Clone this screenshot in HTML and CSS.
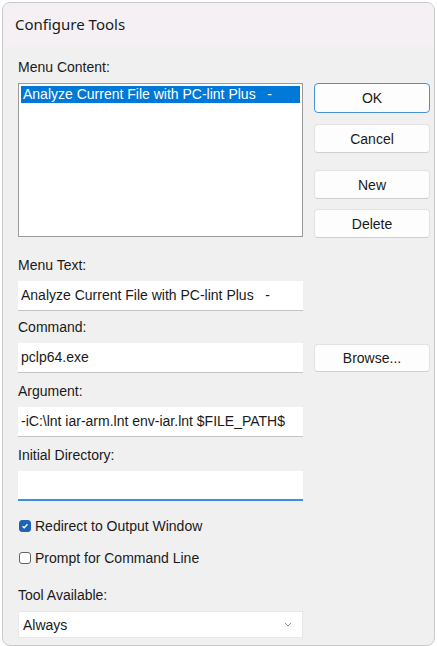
FILE: index.html
```html
<!DOCTYPE html>
<html lang="en">
<head>
  <meta charset="UTF-8" />
  <title>Configure Tools</title>
  <link rel="stylesheet" href="styles.css">
</head>
<body>
  <div class="window">
    <div class="titlebar">Configure Tools</div>

    <div class="content">
      <div class="label">Menu Content:</div>
      <div class="top-row">
        <div class="listbox">
          <div class="item selected">Analyze Current File with PC-lint Plus &nbsp; -</div>
        </div>
        <div class="buttons">
          <button class="btn default">OK</button>
          <button class="btn cancel">Cancel</button>
          <button class="btn new">New</button>
          <button class="btn delete">Delete</button>
        </div>
      </div>

      <div class="field first">
        <div class="label">Menu Text:</div>
        <div class="row">
          <div class="input">Analyze Current File with PC-lint Plus &nbsp; -</div>
        </div>
      </div>

      <div class="field">
        <div class="label">Command:</div>
        <div class="row">
          <div class="input">pclp64.exe</div>
          <button class="btn browse">Browse...</button>
        </div>
      </div>

      <div class="field wide">
        <div class="label">Argument:</div>
        <div class="row">
          <div class="input">-iC:\lnt iar-arm.lnt env-iar.lnt $FILE_PATH$</div>
        </div>
      </div>

      <div class="field wide">
        <div class="label">Initial Directory:</div>
        <div class="row">
          <div class="input focused"></div>
        </div>
      </div>

      <div class="check-list">
        <label class="check">
          <span class="box checked">
            <svg width="8" height="8" viewBox="0 0 8 8"><path d="M1.5 4.2 L3.2 5.8 L6.5 2.2" fill="none" stroke="#fff" stroke-width="1.3"/></svg>
          </span>
          Redirect to Output Window
        </label>
        <label class="check">
          <span class="box"></span>
          Prompt for Command Line
        </label>
      </div>

      <div class="field last">
        <div class="label">Tool Available:</div>
        <div class="select">
          <span>Always</span>
          <svg width="8" height="5" viewBox="0 0 8 5"><path d="M1 1 L4 4 L7 1" fill="none" stroke="#999" stroke-width="1"/></svg>
        </div>
      </div>
    </div>
  </div>
</body>
</html>
```
FILE: styles.css
```css
* {
  margin: 0;
  padding: 0;
  box-sizing: border-box;
}

body {
  background: #ffffff;
  padding: 2px 2px 0 2px;
  font-family: "Liberation Sans", Arial, sans-serif;
  font-size: 14px;
  color: #000;
}

.window {
  height: 644px;
  border: 1px solid #c9c9c9;
  border-radius: 8px;
  background: #f0f0f0;
  overflow: hidden;
}

.titlebar {
  height: 44px;
  background: #f4f0f4;
  padding: 11px 0 0 12px;
  font-family: "Noto Sans", "Open Sans", sans-serif;
  font-size: 15px;
  color: #1a1a1a;
}

.content {
  padding: 12px 0 0 15px;
}

.label {
  height: 16px;
  line-height: 16px;
  color: #1a1a1a;
}

.top-row {
  display: flex;
  gap: 11px;
  margin-top: 8px;
}

.listbox {
  width: 285px;
  height: 154px;
  background: #fff;
  border: 1px solid #9a9a9a;
  padding: 2px;
}

.item {
  height: 17px;
  line-height: 17px;
  padding-left: 2px;
}

.item.selected {
  background: #0078d7;
  color: #fff;
}

.buttons {
  display: flex;
  flex-direction: column;
  width: 116px;
}

.btn {
  display: block;
  width: 116px;
  height: 30px;
  background: #fdfdfd;
  border: 1px solid #e2e2e2;
  border-bottom-color: #cfcfcf;
  border-radius: 4px;
  font-family: "Liberation Sans", Arial, sans-serif;
  font-size: 14px;
  color: #1a1a1a;
}

.btn.default {
  border: 1px solid #4a90d9;
}

.btn.cancel {
  margin-top: 11px;
  height: 29px;
}

.btn.new {
  margin-top: 17px;
  height: 29px;
}

.btn.delete {
  margin-top: 10px;
  height: 29px;
}

.field {
  margin-top: 8px;
}

.field.first {
  margin-top: 19px;
}

.field.wide {
  margin-top: 10px;
}

.row {
  display: flex;
  gap: 11px;
  align-items: center;
  margin-top: 8px;
}

.input {
  width: 285px;
  height: 30px;
  background: #fff;
  border-bottom: 1px solid #c4c4c4;
  padding-left: 3px;
  line-height: 29px;
  white-space: nowrap;
  overflow: hidden;
  color: #1a1a1a;
}

.input.focused {
  border-bottom: 2px solid #3d8ee0;
}

.btn.browse {
  height: 28px;
}

.check-list {
  margin-top: 17px;
  display: flex;
  flex-direction: column;
  gap: 16px;
}

.check {
  display: flex;
  align-items: center;
  gap: 4px;
  height: 16px;
  padding-left: 1px;
  color: #1a1a1a;
}

.box {
  width: 12px;
  height: 12px;
  border: 1px solid #666;
  border-radius: 3px;
  background: #fff;
  display: flex;
  align-items: center;
  justify-content: center;
}

.box.checked {
  background: #1e63b8;
  border-color: #1e63b8;
}

.field.last {
  margin-top: 21px;
}

.select {
  margin-top: 8px;
  width: 285px;
  height: 27px;
  background: #fff;
  border: 1px solid #e8e8e8;
  display: flex;
  align-items: center;
  justify-content: space-between;
  padding: 0 10px 0 4px;
  color: #1a1a1a;
}
```
